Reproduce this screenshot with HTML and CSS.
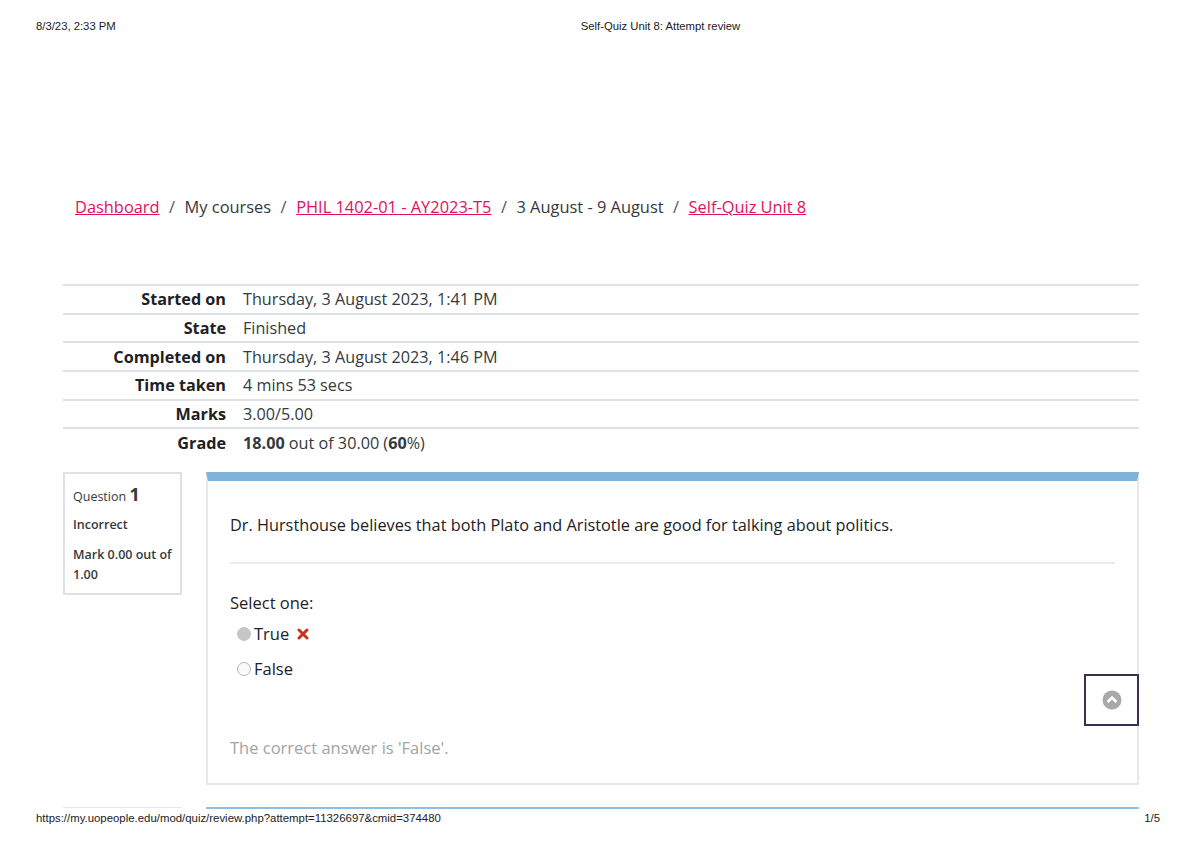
FILE: index.html
```html
<!DOCTYPE html>
<html lang="en">
<head>
    <meta charset="UTF-8">
    <title>Self-Quiz Unit 8: Attempt review</title>
    <link rel="stylesheet" href="styles.css">
</head>
<body>
    <div class="print-head">
        <span class="print-date">8/3/23, 2:33 PM</span>
        <span class="print-title">Self-Quiz Unit 8: Attempt review</span>
    </div>

    <div class="page">
        <nav class="breadcrumb">
            <a href="#">Dashboard</a>
            <span class="sep">/</span>
            <span>My courses</span>
            <span class="sep">/</span>
            <a href="#">PHIL 1402-01 - AY2023-T5</a>
            <span class="sep">/</span>
            <span>3 August - 9 August</span>
            <span class="sep">/</span>
            <a href="#">Self-Quiz Unit 8</a>
        </nav>

        <table class="summary">
            <tr><th>Started on</th><td>Thursday, 3 August 2023, 1:41 PM</td></tr>
            <tr><th>State</th><td>Finished</td></tr>
            <tr><th>Completed on</th><td>Thursday, 3 August 2023, 1:46 PM</td></tr>
            <tr><th>Time taken</th><td>4 mins 53 secs</td></tr>
            <tr><th>Marks</th><td>3.00/5.00</td></tr>
            <tr><th>Grade</th><td><b>18.00</b> out of 30.00 (<b>60</b>%)</td></tr>
        </table>

        <div class="que">
            <div class="info">
                <div class="qno">Question <span>1</span></div>
                <div class="state">Incorrect</div>
                <div class="grade">Mark 0.00 out of 1.00</div>
            </div>
            <div class="content">
                <div class="formulation">
                    <p class="qtext">Dr. Hursthouse believes that both Plato and Aristotle are good for talking about politics.</p>
                    <div class="ablock">
                        <div class="prompt">Select one:</div>
                        <div class="answer">
                            <span class="radio checked"></span>
                            <span>True</span>
                            <svg class="cross" width="12" height="12" viewBox="0 0 12 12"><path d="M2 2 L10 10 M10 2 L2 10" stroke="#ca3120" stroke-width="3" stroke-linecap="round"/></svg>
                        </div>
                        <div class="answer">
                            <span class="radio"></span>
                            <span>False</span>
                        </div>
                    </div>
                    <a class="to-top" href="#">
                        <svg width="20" height="20" viewBox="0 0 20 20"><circle cx="10" cy="10" r="9.5" fill="#a9a9a9"/><path d="M5.6 12 L10 7.6 L14.4 12" fill="none" stroke="#fff" stroke-width="2.6"/></svg>
                    </a>
                </div>
                <div class="outcome">The correct answer is 'False'.</div>
            </div>
        </div>

        <div class="next-que">
            <div class="next-info"></div>
            <div class="next-content"></div>
        </div>
    </div>

    <div class="print-foot">
        <span>https://my.uopeople.edu/mod/quiz/review.php?attempt=11326697&amp;cmid=374480</span>
        <span>1/5</span>
    </div>
</body>
</html>
```

FILE: styles.css
```css
body {
    margin: 0;
    width: 1200px;
    height: 848px;
    overflow: hidden;
    background: #fff;
    font-family: "Open Sans", sans-serif;
    color: #1d2125;
}
.print-head {
    display: flex;
    padding: 20px 0 0 36px;
    height: 16px;
    font-family: "Liberation Sans", Arial, sans-serif;
    font-size: 11.3px;
    color: #222;
}
.print-title {
    margin-left: 465px;
}
.page {
    padding: 0 61px 0 63px;
}
.breadcrumb {
    margin-top: 158px;
    padding-left: 12px;
    font-size: 16.4px;
    color: #343a40;
    display: flex;
    gap: 9.5px;
    height: 24px;
    align-items: center;
}
.breadcrumb a {
    color: #e0115f;
    text-decoration: underline;
}
.breadcrumb .sep {
    color: #555;
}
.summary {
    width: 100%;
    margin-top: 66px;
    border-collapse: collapse;
    font-size: 16.2px;
}
.summary tr {
    border-top: 2px solid #dee2e6;
    height: 28.7px;
}
.summary th {
    width: 163px;
    text-align: right;
    font-weight: 700;
    padding: 0 8px 0 0;
}
.summary td {
    padding: 0 9px;
    color: #343a40;
}
.que {
    display: flex;
    margin-top: 15px;
    gap: 24px;
}
.info {
    width: 99px;
    height: 103px;
    border: 2px solid #dee2e6;
    padding: 10px 8px 6px 8px;
    font-size: 12.5px;
    color: #343a40;
    line-height: 20px;
}
.qno span {
    font-size: 18px;
    font-weight: 700;
}
.state {
    font-weight: 600;
    margin-top: 8px;
}
.grade {
    font-weight: 600;
    margin-top: 10px;
}
.content {
    flex: 1;
    height: 302px;
    border: 2px solid #e6e8eb;
    border-top: 9px solid #7fb3da;
    display: flex;
    flex-direction: column;
}
.formulation {
    position: relative;
    height: 238px;
    padding: 0 22px 0 22px;
}
.qtext {
    margin: 0;
    padding: 33px 0 26px;
    font-size: 16.3px;
    border-bottom: 2px solid #e9ebee;
}
.ablock {
    padding-top: 27px;
    font-size: 16.5px;
}
.prompt {
    margin-bottom: 2px;
}
.answer {
    display: flex;
    align-items: center;
    height: 35px;
    gap: 3px;
    padding-left: 7px;
}
.radio {
    width: 12px;
    height: 12px;
    border: 1px solid #b9b9b9;
    border-radius: 50%;
    background: #fafafa;
}
.radio.checked {
    background: #c6c6c6;
    border-color: #c6c6c6;
}
.cross {
    margin-left: 5px;
}
.to-top {
    position: absolute;
    right: -2px;
    top: 193px;
    width: 51px;
    height: 48px;
    border: 2px solid #3b2e50;
    display: flex;
    align-items: center;
    justify-content: center;
    background: #fff;
}
.outcome {
    flex: 1;
    background: #fff;
    padding: 17px 22px 0;
    font-size: 16.5px;
    color: #a3a3a3;
}
.next-que {
    display: flex;
    gap: 24px;
    margin-top: 22px;
}
.next-info {
    width: 119px;
    border-top: 1px solid #e3e6ea;
}
.next-content {
    flex: 1;
    border-top: 2px solid #8fbfe3;
}
.print-foot {
    position: absolute;
    top: 812px;
    left: 36px;
    right: 40px;
    display: flex;
    justify-content: space-between;
    font-family: "Liberation Sans", Arial, sans-serif;
    font-size: 11.4px;
    color: #222;
}
```
